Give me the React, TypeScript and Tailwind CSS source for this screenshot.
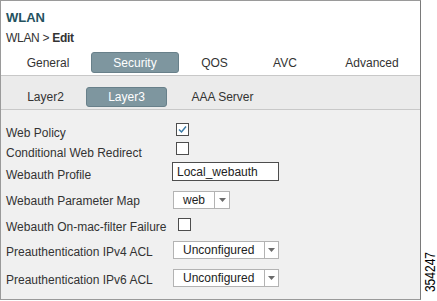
const MAIN_TABS = [
  { label: "General", w: "w-[80px]", ml: "ml-[7px]" },
  { label: "Security", w: "w-[88px]", ml: "ml-[3px]", active: true },
  { label: "QOS", w: "w-[71px]", ml: "" },
  { label: "AVC", w: "w-[70px]", ml: "" },
  { label: "Advanced", w: "w-[84px]", ml: "ml-[10px]" },
];

const SUB_TABS = [
  { label: "Layer2", w: "w-[79px]", ml: "ml-[5px]" },
  { label: "Layer3", w: "w-[81px]", ml: "ml-[1px]", active: true },
  { label: "AAA Server", w: "w-[111px]", ml: "" },
];

function Checkbox({ checked }: { checked?: boolean }) {
  return (
    <span className="flex h-[13px] w-[13px] items-center justify-center border border-[#4d4d4d] bg-white">
      {checked && (
        <svg width="11" height="11" viewBox="0 0 11 11">
          <path d="M2 5.5 L4.5 8 L9 2.5" fill="none" stroke="#3a7aa6" strokeWidth="1.5" />
        </svg>
      )}
    </span>
  );
}

function Select({ value, w, textW }: { value: string; w: string; textW: string }) {
  return (
    <span className={`flex h-[18px] ${w} items-stretch border border-[#b3b3b3] bg-white`}>
      <span className={`flex ${textW} items-center pl-[9px] text-[12px] text-[#222]`}>{value}</span>
      <span className="flex flex-1 items-center justify-center border-l border-[#b3b3b3]">
        <svg width="7" height="4" viewBox="0 0 7 4">
          <path d="M0 0 L7 0 L3.5 4 Z" fill="#6b6b6b" />
        </svg>
      </span>
    </span>
  );
}

const ROWS = [
  { label: "Web Policy", rowMt: "mt-0", labelMt: "mt-[2px]", ctrlMl: "ml-[4px]", ctrl: <Checkbox checked /> },
  { label: "Conditional Web Redirect", rowMt: "mt-[1px]", labelMt: "mt-[3px]", ctrlMl: "ml-[4px]", ctrl: <Checkbox /> },
  {
    label: "Webauth Profile",
    rowMt: "mt-[1px]",
    labelMt: "mt-[5px]",
    ctrlMl: "ml-0",
    ctrl: (
      <span className="flex h-[19px] w-[107px] items-center border border-[#4d4d4d] bg-white pl-[4px] text-[12px] text-[#222]">
        Local_webauth
      </span>
    ),
  },
  {
    label: "Webauth Parameter Map",
    rowMt: "mt-[8px]",
    labelMt: "mt-[2px]",
    ctrlMl: "ml-[1px]",
    ctrl: <Select value="web" w="w-[57px]" textW="w-[40px]" />,
  },
  { label: "Webauth On-mac-filter Failure", rowMt: "mt-[9px]", labelMt: "mt-[1px]", ctrlMl: "ml-[6px]", ctrl: <Checkbox /> },
  {
    label: "Preauthentication IPv4 ACL",
    rowMt: "mt-[6px]",
    labelMt: "mt-[3px]",
    ctrlMl: "ml-[1px]",
    ctrl: <Select value="Unconfigured" w="w-[106px]" textW="w-[90px]" />,
  },
  {
    label: "Preauthentication IPv6 ACL",
    rowMt: "mt-[9px]",
    labelMt: "mt-[3px]",
    ctrlMl: "ml-[1px]",
    ctrl: <Select value="Unconfigured" w="w-[106px]" textW="w-[90px]" />,
  },
];

export default function App() {
  return (
    <div className="flex h-[301px] w-[437px] bg-white font-['Liberation_Sans',Arial,sans-serif] text-[#333]">
      <div className="flex h-[300px] w-[421px] flex-col border border-[#9a9a9a] border-r-[#7a7a7a]">
        {/* header */}
        <div className="flex flex-col border-b border-[#c8c8c8] bg-white pb-[2px]">
          <div className="ml-[5px] mt-[9px] text-[13px] font-bold leading-4 text-[#24525f]">WLAN</div>
          <div className="ml-[5px] mt-[4px] text-[12px] leading-4 tracking-[-0.3px] text-[#333]">
            WLAN &gt; <span className="font-bold">Edit</span>
          </div>
          <div className="mt-[6px] flex h-[21px] items-center">
            {MAIN_TABS.map((t) => (
              <div
                key={t.label}
                className={`flex h-[21px] ${t.w} ${t.ml} items-center justify-center text-[12px] ${
                  t.active ? "rounded-[3px] border border-[#68808a] bg-[#7e969f] text-white" : "text-[#333]"
                }`}
              >
                {t.label}
              </div>
            ))}
          </div>
        </div>

        {/* sub tabs */}
        <div className="flex border-b border-[#c8c8c8] bg-[#ebebeb] pb-[2px] pt-[11px]">
          {SUB_TABS.map((t) => (
            <div
              key={t.label}
              className={`flex h-[20px] ${t.w} ${t.ml} items-center justify-center text-[12px] ${
                t.active ? "rounded-[3px] border border-[#68808a] bg-[#7e969f] text-white" : "text-[#333]"
              }`}
            >
              {t.label}
            </div>
          ))}
        </div>

        {/* form */}
        <div className="flex flex-1 flex-col bg-[#f0f0f0] pl-[5px] pt-[13px]">
          {ROWS.map((r) => (
            <div key={r.label} className={`flex items-start ${r.rowMt}`}>
              <span className={`w-[166px] shrink-0 whitespace-nowrap text-[12px] leading-4 text-[#333] ${r.labelMt}`}>
                {r.label}
              </span>
              <span className={r.ctrlMl}>{r.ctrl}</span>
            </div>
          ))}
        </div>
      </div>

      <div className="flex w-[16px] flex-col items-center justify-end pb-[4px]">
        <span className="rotate-180 scale-y-[0.8] text-[15px] leading-[15px] text-black [writing-mode:vertical-rl]">
          354247
        </span>
      </div>
    </div>
  );
}
